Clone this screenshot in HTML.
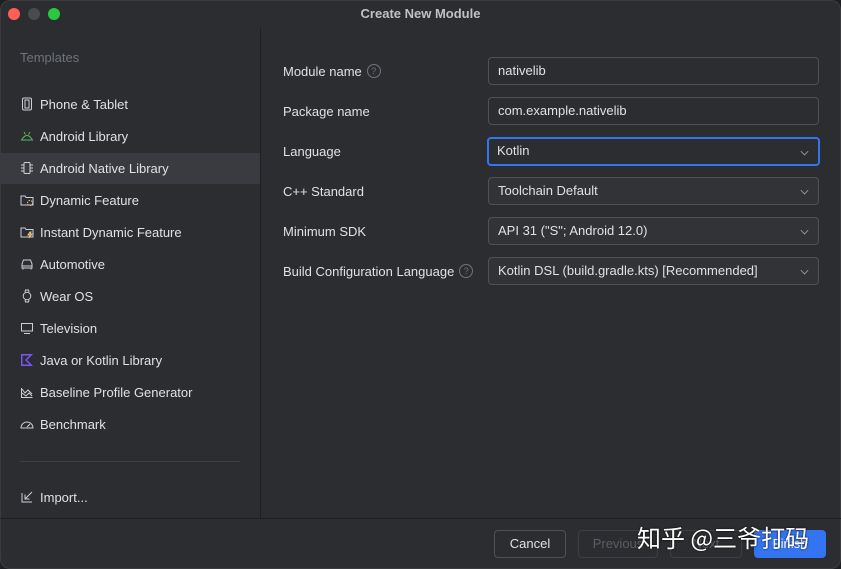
<!DOCTYPE html>
<html><head><meta charset="utf-8"><style>
*{margin:0;padding:0;box-sizing:border-box}
body{width:841px;height:569px;background:#1e1f22;font-family:"Liberation Sans","Noto Sans CJK SC",sans-serif;font-size:13px;color:#dfe1e5;overflow:hidden;position:relative}
.win{position:absolute;left:0;top:0;width:841px;height:569px;background:#2b2d30;border-radius:10px;overflow:hidden;box-shadow:inset 0 0 0 1px #3a3c40}
.title{position:absolute;top:0;left:0;right:0;height:28px;text-align:center;line-height:27px;font-weight:bold;color:#bfc1c5;font-size:13px}
.dot{position:absolute;top:8px;width:12px;height:12px;border-radius:50%}
.side{position:absolute;left:0;top:28px;width:261px;height:490px;border-right:1px solid #1e1f22}
.item{position:absolute;left:0;width:260px;height:31px;line-height:31px;padding-left:40px;color:#dfe1e5}
.item.sel{background:#393b40}
.ic{position:absolute;left:20px;top:8px;width:14px;height:14px}
.lab{position:absolute;left:283px;color:#dfe1e5}
.fld{position:absolute;left:488px;width:331px;height:28px;border:1px solid #4e5157;border-radius:4px;background:#2b2d30;padding-left:9px;line-height:26px}
.fld.foc{border:2px solid #3574f0;padding-left:8px;line-height:24px;left:487px;width:333px;height:29px}
.chev{position:absolute;right:10px;top:9px;width:7px;height:7px;border-right:1.3px solid #9da0a8;border-bottom:1.3px solid #9da0a8;transform:rotate(45deg) scale(.8)}
.q{display:inline-block;width:14px;height:14px;border:1px solid #6f737a;border-radius:50%;font-size:9px;text-align:center;line-height:12px;color:#6f737a;vertical-align:top;margin-left:5px}
.btn{position:absolute;top:530px;height:28px;border:1px solid #4e5157;border-radius:4px;text-align:center;line-height:26px;font-size:13px}
</style></head><body>
<div class="win">
<div class="title">Create New Module</div>
<div class="dot" style="left:8px;background:#ff5f57"></div>
<div class="dot" style="left:28px;background:#4a4b4e"></div>
<div class="dot" style="left:48px;background:#28c840"></div>
<div class="side">
<div style="position:absolute;left:20px;top:22px;color:#6f737a">Templates</div>
<div class="item" style="top:61px"><svg class="ic" viewBox="0 0 14 14" fill="none" stroke="#ced0d6"><rect x="2.5" y="1" width="9" height="12" rx="1.5"/><rect x="5" y="3" width="4" height="8"/></svg>Phone &amp; Tablet</div>
<div class="item" style="top:93px"><svg class="ic" viewBox="0 0 14 14" fill="none" stroke="#5fb865"><path d="M1.5 11 Q7 2 12.5 11Z M4 3l1.5 2.5 M10 3l-1.5 2.5"/></svg>Android Library</div>
<div class="item sel" style="top:125px"><svg class="ic" viewBox="0 0 14 14" fill="none" stroke="#ced0d6"><rect x="4" y="1.5" width="6" height="11" rx="1"/><path d="M1 4h3M1 7h3M1 10h3M10 4h3M10 7h3M10 10h3"/></svg>Android Native Library</div>
<div class="item" style="top:157px"><svg class="ic" viewBox="0 0 14 14" fill="none" stroke="#ced0d6"><path d="M1 3h4l1 1.5h7V12H1Z"/><circle cx="10" cy="10" r="2.5" stroke="#e5c07b" stroke-dasharray="1.5 1"/></svg>Dynamic Feature</div>
<div class="item" style="top:189px"><svg class="ic" viewBox="0 0 14 14" fill="none" stroke="#ced0d6"><path d="M1 3h4l1 1.5h7V12H1Z"/><path d="M10 7l-2 3h2l-1 3 3-4h-2l1-2Z" stroke="#e5c07b"/></svg>Instant Dynamic Feature</div>
<div class="item" style="top:221px"><svg class="ic" viewBox="0 0 14 14" fill="none" stroke="#ced0d6"><path d="M2 7l1.5-4h7L12 7v4H2Z M2 9h10 M3 11v1.5 M11 11v1.5"/></svg>Automotive</div>
<div class="item" style="top:253px"><svg class="ic" viewBox="0 0 14 14" fill="none" stroke="#ced0d6"><circle cx="7" cy="7" r="3.8"/><path d="M5 3L5.5 1h3L9 3M5 11l.5 2h3l.5-2"/></svg>Wear OS</div>
<div class="item" style="top:285px"><svg class="ic" viewBox="0 0 14 14" fill="none" stroke="#ced0d6"><rect x="1.5" y="2.5" width="11" height="7.5"/><path d="M4 12.5h6"/></svg>Television</div>
<div class="item" style="top:317px"><svg class="ic" viewBox="0 0 14 14"><path d="M1 1h12L7 7l6 6H1Z" fill="#7f52ff"/><path d="M2.5 2.5h7L5 7l4.5 4.5h-7Z" fill="#2b2d30"/></svg>Java or Kotlin Library</div>
<div class="item" style="top:349px"><svg class="ic" viewBox="0 0 14 14" fill="none" stroke="#ced0d6"><path d="M1.5 3v9.5h11 M2 4l3 4 3-3 4 4 M2 8l4 3 3-3 3 3"/></svg>Baseline Profile Generator</div>
<div class="item" style="top:381px"><svg class="ic" viewBox="0 0 14 14" fill="none" stroke="#ced0d6"><path d="M1 11a6 6 0 0 1 12 0Z M7 10l3-3"/></svg>Benchmark</div>
<div style="position:absolute;left:20px;top:433px;width:220px;height:1px;background:#3c3f44"></div>
<div class="item" style="top:454px"><svg class="ic" viewBox="0 0 14 14" fill="none" stroke="#ced0d6"><path d="M2 3v9h10 M12 2L5 9 M5 4.5V9h4.5"/></svg>Import...</div>
</div>
<div class="lab" style="top:64px">Module name<span class="q">?</span></div>
<div class="lab" style="top:104px">Package name</div>
<div class="lab" style="top:144px">Language</div>
<div class="lab" style="top:184px">C++ Standard</div>
<div class="lab" style="top:224px">Minimum SDK</div>
<div class="lab" style="top:264px">Build Configuration Language<span class="q">?</span></div>
<div class="fld" style="top:57px">nativelib</div>
<div class="fld" style="top:97px">com.example.nativelib</div>
<div class="fld foc" style="top:137px">Kotlin<div class="chev"></div></div>
<div class="fld" style="top:177px;background:#313336">Toolchain Default<div class="chev"></div></div>
<div class="fld" style="top:217px;background:#313336">API 31 ("S"; Android 12.0)<div class="chev"></div></div>
<div class="fld" style="top:257px;background:#313336">Kotlin DSL (build.gradle.kts) [Recommended]<div class="chev"></div></div>
<div style="position:absolute;left:0;top:518px;width:841px;height:1px;background:#1e1f22"></div>
<div class="btn" style="left:494px;width:72px">Cancel</div>
<div class="btn" style="left:578px;width:80px;color:#5a5d63;border-color:#3c3f44">Previous</div>
<div class="btn" style="left:670px;width:72px;color:#5a5d63;border-color:#3c3f44">Next</div>
<div class="btn" style="left:754px;width:72px;background:#3574f0;border-color:#3574f0;color:#fff">Finish</div>
<div style="position:absolute;left:637px;top:519px;font-size:24px;color:#fff;text-shadow:0 0 2px #000;font-family:'Noto Sans CJK SC',sans-serif">知乎 @三爷打码</div>
</div>
</body></html>
